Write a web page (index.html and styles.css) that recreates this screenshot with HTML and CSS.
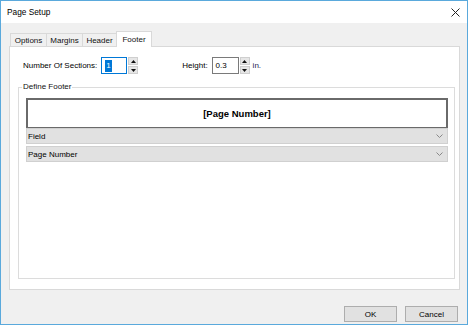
FILE: index.html
```html
<!DOCTYPE html>
<html lang="en">
<head>
  <meta charset="UTF-8">
  <title>Page Setup</title>
  <link rel="stylesheet" href="styles.css">
</head>
<body>
  <div class="window">
    <div class="titlebar">
      <span class="title">Page Setup</span>
      <span class="close">
        <svg width="9" height="9" viewBox="0 0 9 9"><path d="M0.5 0.5L8.5 8.5M8.5 0.5L0.5 8.5" stroke="#222" stroke-width="1"/></svg>
      </span>
    </div>

    <div class="content">
      <div class="tabs">
        <div class="tab">Options</div>
        <div class="tab">Margins</div>
        <div class="tab narrow">Header</div>
        <div class="tab active">Footer</div>
      </div>

      <div class="panel">
        <div class="row">
          <span class="label">Number Of Sections:</span>
          <div class="num-input focused"><span class="selected">1</span></div>
          <div class="spinner">
            <div class="spin-btn"><svg width="5" height="3" viewBox="0 0 5 3"><path d="M0 3L2.5 0L5 3Z" fill="#111"/></svg></div>
            <div class="spin-btn"><svg width="5" height="3" viewBox="0 0 5 3"><path d="M0 0L2.5 3L5 0Z" fill="#111"/></svg></div>
          </div>
          <span class="label height-label">Height:</span>
          <div class="num-input wide">0.3</div>
          <div class="spinner">
            <div class="spin-btn"><svg width="5" height="3" viewBox="0 0 5 3"><path d="M0 3L2.5 0L5 3Z" fill="#111"/></svg></div>
            <div class="spin-btn"><svg width="5" height="3" viewBox="0 0 5 3"><path d="M0 0L2.5 3L5 0Z" fill="#111"/></svg></div>
          </div>
          <span class="unit">in.</span>
        </div>

        <fieldset class="group">
          <legend>Define Footer</legend>
          <div class="preview">[Page Number]</div>
          <div class="combo">
            <span>Field</span>
            <svg width="7" height="4" viewBox="0 0 7 4"><path d="M0.5 0.5L3.5 3.5L6.5 0.5" fill="none" stroke="#888" stroke-width="1"/></svg>
          </div>
          <div class="combo">
            <span>Page Number</span>
            <svg width="7" height="4" viewBox="0 0 7 4"><path d="M0.5 0.5L3.5 3.5L6.5 0.5" fill="none" stroke="#888" stroke-width="1"/></svg>
          </div>
        </fieldset>
      </div>

      <div class="buttons">
        <div class="btn">OK</div>
        <div class="btn">Cancel</div>
      </div>
    </div>
  </div>
</body>
</html>
```

FILE: styles.css
```css
body {
  margin: 0;
  font-family: 'Liberation Sans', Arial, sans-serif;
  font-size: 8px;
  color: #000;
}

.window {
  width: 468px;
  height: 325px;
  box-sizing: border-box;
  border: 1px solid #5aa9dc;
  background: #f0f0f0;
  display: flex;
  flex-direction: column;
}

.titlebar {
  height: 22px;
  background: #fff;
  display: flex;
  align-items: center;
  justify-content: space-between;
  padding: 0 6px;
}

.title {
  font-size: 8.3px;
}

.close {
  display: flex;
  margin-right: 1px;
}

.content {
  flex: 1;
  display: flex;
  flex-direction: column;
  padding: 8px 7px 0 8px;
}

.tabs {
  display: flex;
  align-items: flex-end;
  height: 15px;
  padding-left: 1px;
  position: relative;
  z-index: 1;
}

.tab {
  width: 37px;
  height: 13px;
  line-height: 13px;
  box-sizing: border-box;
  text-align: center;
  border: 1px solid #d9d9d9;
  border-bottom: none;
  margin-right: -1px;
  background: #f0f0f0;
  color: #111;
}

.tab.narrow {
  width: 35px;
}

.tab.active {
  width: 36px;
  height: 16px;
  line-height: 15px;
  margin-bottom: -1px;
  background: #fff;
}

.panel {
  height: 244px;
  box-sizing: border-box;
  border: 1px solid #d9d9d9;
  background: #fff;
  padding: 10px 4px 0 8px;
  display: flex;
  flex-direction: column;
}

.row {
  display: flex;
  align-items: center;
  height: 17px;
  padding-left: 5px;
}

.label {
  margin-right: 4px;
}

.height-label {
  margin-left: 44px;
}

.num-input {
  width: 26px;
  height: 17px;
  box-sizing: border-box;
  border: 1px solid #7a7a7a;
  padding-left: 3px;
  display: flex;
  align-items: center;
}

.num-input.wide {
  width: 27px;
}

.num-input.focused {
  border-color: #0078d7;
}

.selected {
  background: #0078d7;
  color: #fff;
  padding: 0 1px;
  line-height: 12px;
}

.spinner {
  display: flex;
  flex-direction: column;
  justify-content: space-between;
  width: 10px;
  height: 17px;
  margin-left: 1px;
}

.spin-btn {
  height: 8px;
  box-sizing: border-box;
  background: #e6e6e6;
  border: 1px solid #cfcfcf;
  display: flex;
  align-items: center;
  justify-content: center;
}

.unit {
  margin-left: 3px;
  color: #1c1c50;
}

.group {
  margin: 8px 0 10px 0;
  padding: 0 6px 0 7px;
  border: 1px solid #dcdcdc;
  flex: 1;
  min-width: 0;
}

.group legend {
  margin-left: -4px;
  padding: 0 1px;
  line-height: 10px;
  color: #111;
}

.preview {
  margin-top: 6px;
  height: 30px;
  box-sizing: border-box;
  border: 2px solid #6a6a6a;
  border-bottom-width: 1px;
  display: flex;
  align-items: center;
  justify-content: center;
  font-weight: bold;
  font-size: 9.5px;
}

.combo {
  height: 16px;
  box-sizing: border-box;
  background: #e1e1e1;
  border: 1px solid #d0d0d0;
  display: flex;
  align-items: center;
  justify-content: space-between;
  padding: 0 4px 0 1px;
}

.combo + .combo {
  margin-top: 2px;
}

.buttons {
  display: flex;
  justify-content: flex-end;
  gap: 8px;
  margin-top: 16px;
  margin-right: 2px;
}

.btn {
  width: 53px;
  height: 16px;
  box-sizing: border-box;
  background: #e1e1e1;
  border: 1px solid #adadad;
  display: flex;
  align-items: center;
  justify-content: center;
}
```
